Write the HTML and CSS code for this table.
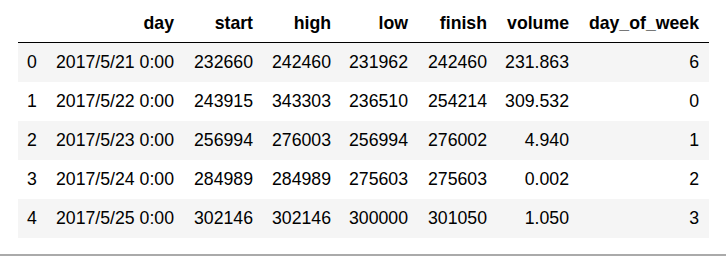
FILE: index.html
```html
<!DOCTYPE html>
<html lang="en">
<head>
    <meta charset="UTF-8">
    <title>DataFrame</title>
    <link rel="stylesheet" href="styles.css">
</head>
<body>

<div class="output">
    <table class="dataframe">
        <colgroup>
            <col class="c-idx">
            <col class="c-day">
            <col class="c-start">
            <col class="c-high">
            <col class="c-low">
            <col class="c-finish">
            <col class="c-volume">
            <col class="c-dow">
        </colgroup>
        <thead>
            <tr>
                <th></th>
                <th>day</th>
                <th>start</th>
                <th>high</th>
                <th>low</th>
                <th>finish</th>
                <th>volume</th>
                <th>day_of_week</th>
            </tr>
        </thead>
        <tbody>
            <tr>
                <td class="idx">0</td>
                <td>2017/5/21 0:00</td>
                <td>232660</td>
                <td>242460</td>
                <td>231962</td>
                <td>242460</td>
                <td>231.863</td>
                <td>6</td>
            </tr>
            <tr>
                <td class="idx">1</td>
                <td>2017/5/22 0:00</td>
                <td>243915</td>
                <td>343303</td>
                <td>236510</td>
                <td>254214</td>
                <td>309.532</td>
                <td>0</td>
            </tr>
            <tr>
                <td class="idx">2</td>
                <td>2017/5/23 0:00</td>
                <td>256994</td>
                <td>276003</td>
                <td>256994</td>
                <td>276002</td>
                <td>4.940</td>
                <td>1</td>
            </tr>
            <tr>
                <td class="idx">3</td>
                <td>2017/5/24 0:00</td>
                <td>284989</td>
                <td>284989</td>
                <td>275603</td>
                <td>275603</td>
                <td>0.002</td>
                <td>2</td>
            </tr>
            <tr>
                <td class="idx">4</td>
                <td>2017/5/25 0:00</td>
                <td>302146</td>
                <td>302146</td>
                <td>300000</td>
                <td>301050</td>
                <td>1.050</td>
                <td>3</td>
            </tr>
        </tbody>
    </table>
</div>
<div class="divider"></div>

</body>
</html>
```

FILE: styles.css
```css
body {
    margin: 0;
    background-color: #fff;
    font-family: 'Liberation Sans', Arial, sans-serif;
    font-size: 17.7px;
    color: #000;
}
.output {
    padding: 4px 0 0 18px;
}
.dataframe {
    width: 691px;
    table-layout: fixed;
    border-collapse: collapse;
    border: none;
}
.c-idx { width: 27px; }
.c-day { width: 139px; }
.c-start { width: 79px; }
.c-high { width: 78px; }
.c-low { width: 77px; }
.c-finish { width: 79px; }
.c-volume { width: 82px; }
.c-dow { width: 130px; }
.dataframe th, .dataframe td {
    padding: 0 10px 0 0;
    text-align: right;
    vertical-align: middle;
    white-space: nowrap;
}
.dataframe th {
    height: 38px;
    font-weight: bold;
    border-bottom: 1px solid #000;
}
.dataframe td {
    height: 39px;
}
.dataframe td.idx {
    text-align: left;
    padding: 0 0 0 9px;
}
.dataframe tbody tr:nth-child(odd) {
    background-color: #f5f5f5;
}
.divider {
    margin-top: 16px;
    border-top: 2px solid #aaa;
}
```
